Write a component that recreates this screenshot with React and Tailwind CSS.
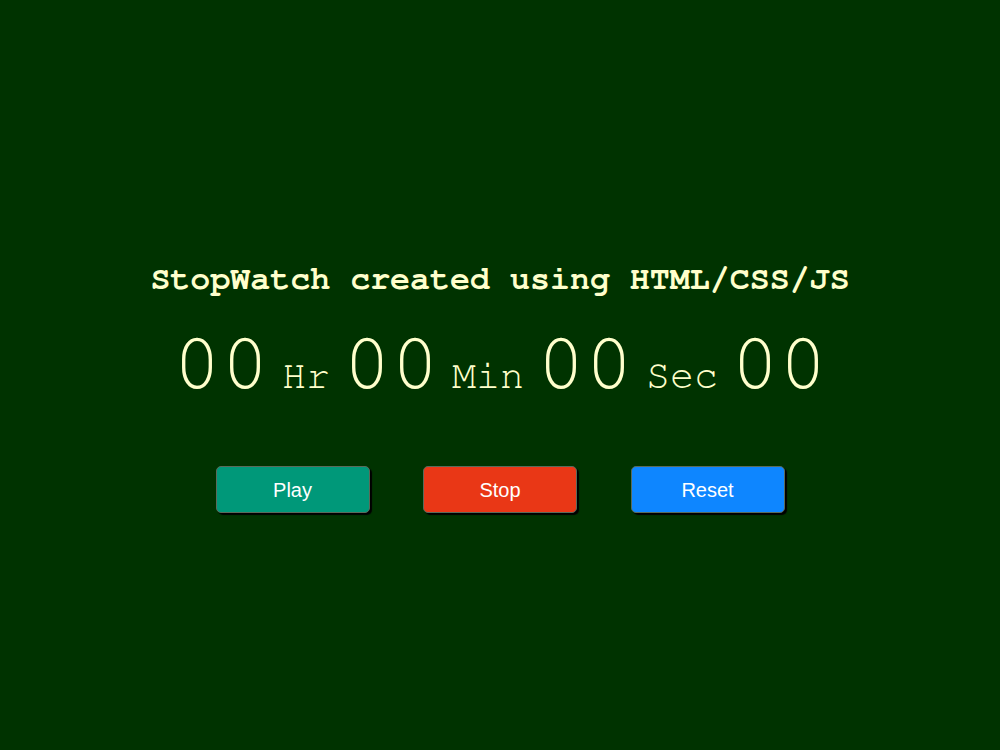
export default function App() {
  const digit = "text-[80px] leading-none";
  const label = "text-[40px] leading-none mx-[13px]";
  const btn = "w-[154px] h-[47px] rounded-[5px] text-white text-[20px] border border-[#5a6b5a] shadow-[2px_2px_1px_#000]";
  return (
    <div className="w-[1000px] h-[750px] bg-[#003300] flex flex-col items-center pt-[261px] text-[#ffffcc]" style={{ fontFamily: 'FreeMono, "Liberation Mono", monospace' }}>
      <h1 className="text-[33.3px] leading-[36px] font-bold h-[36px]">StopWatch created using HTML/CSS/JS</h1>
      <div className="mt-[27px] h-[88px] whitespace-nowrap">
        <span className={digit}>00</span>
        <span className={label}>Hr</span>
        <span className={digit}>00</span>
        <span className={label}>Min</span>
        <span className={digit}>00</span>
        <span className={label}>Sec</span>
        <span className={digit}>00</span>
      </div>
      <div className="mt-[54px] flex gap-[53.5px]" style={{ fontFamily: '"Liberation Sans", Arial, sans-serif' }}>
        <button className={btn + " bg-[#009879]"}>Play</button>
        <button className={btn + " bg-[#e93716]"}>Stop</button>
        <button className={btn + " bg-[#0e86ff]"}>Reset</button>
      </div>
    </div>
  );
}
